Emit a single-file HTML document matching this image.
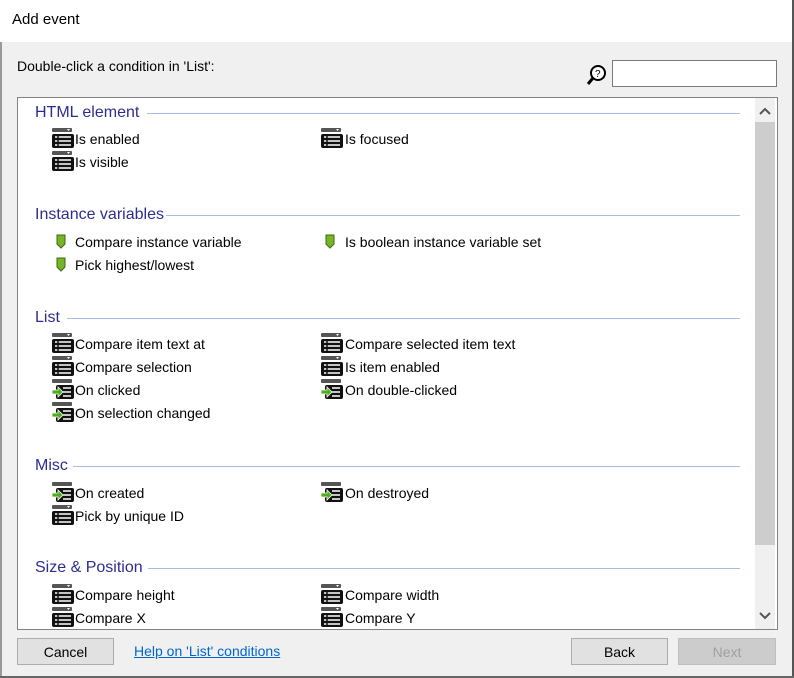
<!DOCTYPE html><html><head><style>
body{margin:0;width:794px;height:678px;background:#f0f0f0;font-family:"Liberation Sans",sans-serif;font-size:14px;position:relative;overflow:hidden}
.a{position:absolute;white-space:nowrap}
.t{position:absolute;white-space:nowrap;line-height:18px}
.h{position:absolute;color:#2d2d8f;font-size:16px;line-height:18px}
.ln{position:absolute;height:1px;background:#a8bce6}
.btn{position:absolute;width:96px;height:26px;border:1px solid #adadad;background:#e1e1e1;text-align:center;line-height:26px;font-size:14px;box-sizing:border-box}
</style></head><body>
<div class="a" style="left:0;top:0;width:794px;height:42px;background:#fff"></div>
<div class="a" style="left:12px;top:11px;font-size:15px">Add event</div>
<div class="a" style="left:792px;top:0;width:2px;height:678px;background:#555"></div>
<div class="a" style="left:0;top:42px;width:2px;height:636px;background:#999"></div>
<div class="a" style="left:0;top:676px;width:794px;height:2px;background:#666"></div>
<div class="a" style="left:17px;top:58px">Double-click a condition in 'List':</div>
<svg class="a" style="left:586px;top:64px" width="22" height="22" viewBox="0 0 22 22"><circle cx="12" cy="9" r="7" fill="#fff" stroke="#000" stroke-width="2"/><path d="M7 14 L2 20" stroke="#000" stroke-width="3"/><text x="9" y="13" font-size="10" font-family="Liberation Sans">?</text></svg>
<div class="a" style="left:612px;top:60px;width:165px;height:27px;border:1px solid #7a7a7a;background:#fff;box-sizing:border-box"></div>
<div class="a" style="left:17px;top:97px;width:761px;height:533px;border:1px solid #828282;background:#fff;box-sizing:border-box"></div>
<div class="a" style="left:755px;top:98px;width:20px;height:531px;background:#f0f0f0"></div>
<div class="a" style="left:755px;top:122px;width:20px;height:423px;background:#cdcdcd"></div>
<svg class="a" style="left:759px;top:107px" width="12" height="8"><path d="M1 7l5-5 5 5" fill="none" stroke="#555" stroke-width="2"/></svg>
<svg class="a" style="left:759px;top:612px" width="12" height="8"><path d="M1 1l5 5 5-5" fill="none" stroke="#555" stroke-width="2"/></svg>
<svg width="0" height="0" style="position:absolute"><defs>
<g id="L"><rect x="0" y="0" width="20" height="4" rx="1" fill="#555"/><path d="M15 1h3l-1.5 2z" fill="#fff"/><rect x="0" y="6" width="22" height="14" rx="2" fill="#111"/><path d="M3 9h16M3 13h16M3 17h16" stroke="#fff" stroke-width="1.5"/><path d="M6 7v12" stroke="#111" stroke-width="1.5"/></g>
<g id="T"><rect x="0" y="0" width="20" height="4" rx="1" fill="#555"/><rect x="4" y="6" width="18" height="14" rx="2" fill="#111"/><path d="M11 9h8M11 13h8M11 17h8" stroke="#fff" stroke-width="1.5"/><path d="M0 11h6v-3l5 5-5 5v-3h-6z" fill="#4caf20" stroke="#fff" stroke-width=".8"/></g>
<g id="V"><path d="M1 1h8v9l-4 4-4-4z" fill="#78b428" stroke="#3c6a10"/></g>
</defs></svg>
<div class="h" style="left:35px;top:104px">HTML element</div><div class="ln" style="left:147px;top:113px;width:593px"></div>
<svg class="a" style="left:52px;top:128px" width="22" height="20"><use href="#L"/></svg><div class="t" style="left:75px;top:130px">Is enabled</div>
<svg class="a" style="left:321px;top:128px" width="22" height="20"><use href="#L"/></svg><div class="t" style="left:345px;top:130px">Is focused</div>
<svg class="a" style="left:52px;top:151px" width="22" height="20"><use href="#L"/></svg><div class="t" style="left:75px;top:153px">Is visible</div>
<div class="h" style="left:35px;top:206px">Instance variables</div><div class="ln" style="left:166px;top:215px;width:574px"></div>
<svg class="a" style="left:56px;top:234px" width="11" height="15"><use href="#V"/></svg><div class="t" style="left:75px;top:233px">Compare instance variable</div>
<svg class="a" style="left:325px;top:234px" width="11" height="15"><use href="#V"/></svg><div class="t" style="left:345px;top:233px">Is boolean instance variable set</div>
<svg class="a" style="left:56px;top:257px" width="11" height="15"><use href="#V"/></svg><div class="t" style="left:75px;top:256px">Pick highest/lowest</div>
<div class="h" style="left:35px;top:309px">List</div><div class="ln" style="left:67px;top:318px;width:673px"></div>
<svg class="a" style="left:52px;top:333px" width="22" height="20"><use href="#L"/></svg><div class="t" style="left:75px;top:335px">Compare item text at</div>
<svg class="a" style="left:321px;top:333px" width="22" height="20"><use href="#L"/></svg><div class="t" style="left:345px;top:335px">Compare selected item text</div>
<svg class="a" style="left:52px;top:356px" width="22" height="20"><use href="#L"/></svg><div class="t" style="left:75px;top:358px">Compare selection</div>
<svg class="a" style="left:321px;top:356px" width="22" height="20"><use href="#L"/></svg><div class="t" style="left:345px;top:358px">Is item enabled</div>
<svg class="a" style="left:52px;top:379px" width="22" height="20"><use href="#T"/></svg><div class="t" style="left:75px;top:381px">On clicked</div>
<svg class="a" style="left:321px;top:379px" width="22" height="20"><use href="#T"/></svg><div class="t" style="left:345px;top:381px">On double-clicked</div>
<svg class="a" style="left:52px;top:402px" width="22" height="20"><use href="#T"/></svg><div class="t" style="left:75px;top:404px">On selection changed</div>
<div class="h" style="left:35px;top:457px">Misc</div><div class="ln" style="left:73px;top:466px;width:667px"></div>
<svg class="a" style="left:52px;top:482px" width="22" height="20"><use href="#T"/></svg><div class="t" style="left:75px;top:484px">On created</div>
<svg class="a" style="left:321px;top:482px" width="22" height="20"><use href="#T"/></svg><div class="t" style="left:345px;top:484px">On destroyed</div>
<svg class="a" style="left:52px;top:505px" width="22" height="20"><use href="#L"/></svg><div class="t" style="left:75px;top:507px">Pick by unique ID</div>
<div class="h" style="left:35px;top:559px">Size &amp; Position</div><div class="ln" style="left:148px;top:568px;width:592px"></div>
<svg class="a" style="left:52px;top:584px" width="22" height="20"><use href="#L"/></svg><div class="t" style="left:75px;top:586px">Compare height</div>
<svg class="a" style="left:321px;top:584px" width="22" height="20"><use href="#L"/></svg><div class="t" style="left:345px;top:586px">Compare width</div>
<svg class="a" style="left:52px;top:607px" width="22" height="20"><use href="#L"/></svg><div class="t" style="left:75px;top:609px">Compare X</div>
<svg class="a" style="left:321px;top:607px" width="22" height="20"><use href="#L"/></svg><div class="t" style="left:345px;top:609px">Compare Y</div>
<div class="btn" style="left:17px;top:638px;width:97px;height:27px">Cancel</div>
<div class="a" style="left:134px;top:643px;color:#0066cc;text-decoration:underline">Help on 'List' conditions</div>
<div class="btn" style="left:571px;top:638px;width:97px;height:27px">Back</div>
<div class="btn" style="left:678px;top:638px;width:98px;height:27px;background:#cccccc;border-color:#bfbfbf;color:#a0a0a0">Next</div>
</body></html>
